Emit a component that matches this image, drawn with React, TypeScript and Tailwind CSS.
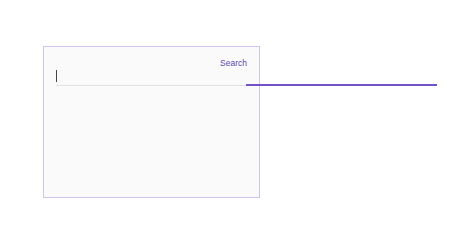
export default function App() {
  return (
    <div className="min-h-screen bg-white pl-[43px] pt-[46px] font-['Liberation_Sans',sans-serif]">
      <div className="w-[217px] h-[152px] border border-[#d1c4e9] bg-[#fafafa]">
        <div className="flex justify-end pr-[12px] pt-[11px]">
          <span className="text-[8.5px] leading-[10px] text-[#5e4bb0]">Search</span>
        </div>
        <div className="relative mx-[12px] mt-[2px] h-[16px] border-b border-[#e2e2e2]">
          <div className="w-px h-[12px] bg-[#444]" />
          <div className="absolute left-[190px] bottom-[-1px] w-full h-[2px] bg-[#7352c7]" />
        </div>
      </div>
    </div>
  );
}
